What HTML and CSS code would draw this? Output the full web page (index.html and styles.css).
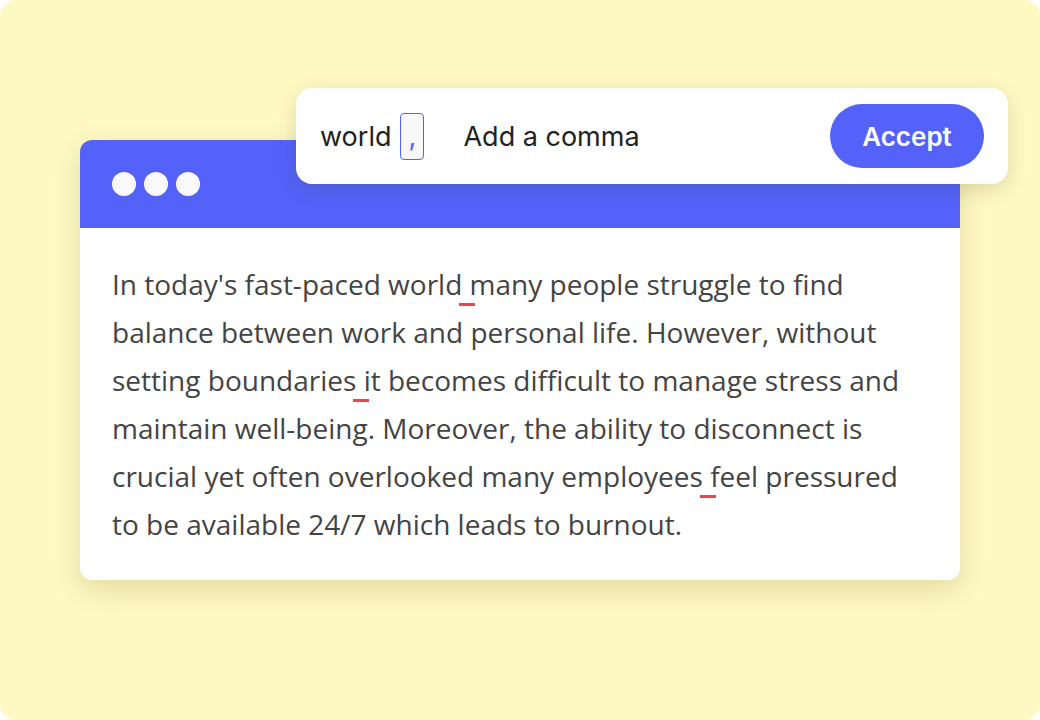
FILE: index.html
```html
<!DOCTYPE html>
<html lang="en">
  <head>
    <meta charset="UTF-8" />
    <meta name="viewport" content="width=device-width, initial-scale=1.0"/>
    <title>Grammar suggestion</title>
    <link rel="stylesheet" href="styles.css">
  </head>
  <body>
    <div class="frame">
      <div class="card">
        <div class="card-header">
          <span class="dot"></span>
          <span class="dot"></span>
          <span class="dot"></span>
        </div>
        <p class="card-text">
          In today's fast-paced world<span class="miss"> </span>many people struggle to find<br>
          balance between work and personal life. However, without<br>
          setting boundaries<span class="miss"> </span>it becomes difficult to manage stress and<br>
          maintain well-being. Moreover, the ability to disconnect is<br>
          crucial yet often overlooked many employees<span class="miss"> </span>feel pressured<br>
          to be available 24/7 which leads to burnout.
        </p>

        <!-- suggestion popup -->
        <div class="suggest">
          <span class="word">world</span>
          <span class="fix">,</span>
          <span class="hint">Add a comma</span>
          <button class="accept">Accept</button>
        </div>
      </div>
    </div>
  </body>
</html>
```

FILE: styles.css
```css
body {
  margin: 0;
  padding: 0;
  background-color: #fff;
}

.frame {
  width: 1040px;
  height: 720px;
  background-color: #fef8c3;
  border-radius: 16px;
  padding: 140px 80px 0 80px;
  box-sizing: border-box;
  overflow: hidden;
}

.card {
  position: relative;
  width: 880px;
  background-color: #fff;
  border-radius: 12px;
  box-shadow: 0 10px 28px rgba(90, 80, 0, 0.16);
}

.card-header {
  display: flex;
  align-items: center;
  gap: 8px;
  height: 88px;
  padding: 0 32px;
  background-color: #5462fa;
  border-top-left-radius: 12px;
  border-top-right-radius: 12px;
}
.dot {
  width: 24px;
  height: 24px;
  border-radius: 50%;
  background-color: #fafafa;
}

.card-text {
  margin: 0;
  padding: 32px;
  font-family: "Open Sans", sans-serif;
  font-size: 28px;
  line-height: 48px;
  color: #444;
  white-space: nowrap;
}
.miss {
  position: relative;
}
.miss::after {
  content: "";
  position: absolute;
  left: -3px;
  top: 38px;
  width: 16px;
  height: 3px;
  background-color: #e8474a;
}

.suggest {
  position: absolute;
  top: -52px;
  left: 216px;
  width: 712px;
  box-sizing: border-box;
  display: flex;
  align-items: center;
  padding: 16px 24px;
  background-color: #fff;
  border-radius: 16px;
  box-shadow: 0 6px 20px rgba(60, 60, 0, 0.16);
  font-family: Inter, sans-serif;
  font-size: 27px;
  font-weight: 400;
  color: #222;
}
.fix {
  display: flex;
  align-items: center;
  justify-content: center;
  width: 24px;
  height: 47px;
  margin-left: 9px;
  box-sizing: border-box;
  border: 1.5px solid #5462fa;
  border-radius: 4px;
  background-color: #f8f8f8;
  color: #5462fa;
}
.hint {
  margin-left: 39px;
}
.accept {
  margin-left: auto;
  width: 154px;
  height: 64px;
  border: none;
  border-radius: 32px;
  background-color: #5462fa;
  color: #fff;
  font-family: Inter, sans-serif;
  font-size: 26px;
  font-weight: 600;
  cursor: pointer;
}
```
